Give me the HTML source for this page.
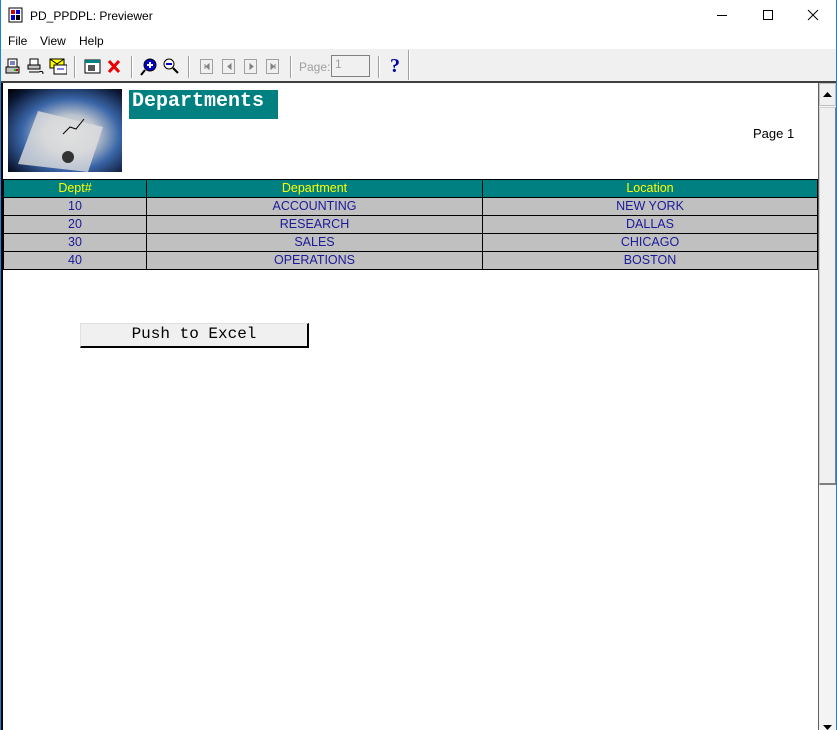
<!DOCTYPE html>
<html><head><style>
*{margin:0;padding:0;box-sizing:border-box}
body{width:837px;height:730px;overflow:hidden;background:#fff;font-family:"Liberation Sans",sans-serif;position:relative}
.a{position:absolute}
.t{font-size:12px;color:#000}
.sep{position:absolute;top:56px;width:2px;height:22px;border-left:1px solid #a0a0a0;border-right:1px solid #fff}
.nav{position:absolute;top:59px;width:13px;height:15px;border:1px solid #a0a0a0;background:#f0f0f0}
table{border-collapse:collapse;position:absolute;left:3px;top:179px;width:815px;font-size:12.5px}
td{border:1px solid #000;height:18px;text-align:center;padding:0;line-height:15px}
tr.h td{background:#008080;color:#ffff00}
tr.r td{background:#c0c0c0;color:#1a1a9a}
</style></head><body>
<div class="a" style="left:0;top:0;width:1px;height:730px;background:#1883d7"></div>
<div class="a" style="left:836px;top:0;width:1px;height:730px;background:#1883d7"></div>
<svg class="a" style="left:8px;top:7px" width="16" height="16"><rect x="1" y="1" width="13" height="14" fill="#fff" stroke="#000"/><rect x="3" y="3" width="4" height="4" fill="#c00"/><rect x="8" y="3" width="4" height="4" fill="#00c"/><rect x="3" y="8" width="4" height="5" fill="#00c"/><rect x="8" y="8" width="4" height="5" fill="#000"/></svg>
<div class="a t" style="left:30px;top:9px">PD_PPDPL: Previewer</div>
<svg class="a" style="left:715px;top:8px" width="110" height="16"><line x1="2" y1="7.5" x2="12" y2="7.5" stroke="#000"/><rect x="48.5" y="2.5" width="9" height="9" fill="none" stroke="#000"/><path d="M93 2L103 12M103 2L93 12" stroke="#000"/></svg>
<div class="a t" style="left:8px;top:34px">File</div>
<div class="a t" style="left:40px;top:34px">View</div>
<div class="a t" style="left:79px;top:34px">Help</div>
<div class="a" style="left:1px;top:49px;width:835px;height:33px;background:#f0f0f0"></div>
<svg class="a" style="left:5px;top:58px" width="62" height="18">
<rect x="3" y="1" width="9" height="8" fill="#fff" stroke="#000"/><line x1="5" y1="4" x2="10" y2="4" stroke="#008"/><line x1="5" y1="6" x2="10" y2="6" stroke="#008"/><rect x="1" y="9" width="13" height="6" fill="#c0c0c0" stroke="#000"/><rect x="9" y="11" width="2" height="2" fill="#0c0"/><rect x="11" y="11" width="2" height="2" fill="#c00"/>
<rect x="25" y="1" width="8" height="6" fill="#fff" stroke="#000"/><rect x="23" y="7" width="12" height="4" fill="#c0c0c0" stroke="#000"/><path d="M24 14H34M34 14Q38 12 38 16" stroke="#000" fill="none"/>
<rect x="45" y="1" width="14" height="9" fill="#ff0" stroke="#000"/><path d="M45 1L52 6L59 1" stroke="#000" fill="none"/><rect x="49" y="7" width="13" height="9" fill="#fff" stroke="#000"/><line x1="52" y1="11" x2="59" y2="11" stroke="#00c"/></svg>
<div class="sep" style="left:74px"></div>
<svg class="a" style="left:84px;top:58px" width="40" height="18"><rect x="1" y="2" width="15" height="13" fill="#fff" stroke="#000"/><rect x="1" y="2" width="15" height="3" fill="#008080"/><rect x="4" y="7" width="7" height="6" fill="#555"/><path d="M25 3L35 14M35 3L25 14" stroke="#e00" stroke-width="3"/></svg>
<div class="sep" style="left:131px"></div>
<svg class="a" style="left:140px;top:57px" width="42" height="20"><circle cx="10" cy="8" r="6" fill="#00c" stroke="#000"/><path d="M7 8H13M10 5V11" stroke="#fff" stroke-width="2"/><line x1="5" y1="13" x2="1" y2="18" stroke="#000" stroke-width="2"/><circle cx="29" cy="7" r="5" fill="#fff" stroke="#000"/><path d="M26 7H32" stroke="#00c" stroke-width="2"/><line x1="33" y1="11" x2="38" y2="16" stroke="#000" stroke-width="2"/></svg>
<div class="sep" style="left:188px"></div>
<div class="nav" style="left:200px"></div><div class="nav" style="left:222px"></div><div class="nav" style="left:244px"></div><div class="nav" style="left:266px"></div>
<svg class="a" style="left:200px;top:59px" width="80" height="15"><path d="M5 5V10M9 5L6 7.5L9 10Z M31 5L28 7.5L31 10Z M50 5L53 7.5L50 10Z M71 5L74 7.5L71 10ZM75 5V10" stroke="#808080" fill="#808080"/></svg>
<div class="sep" style="left:290px"></div>
<div class="a" style="left:299px;top:60px;font-size:12px;color:#a0a0a0">Page:</div>
<div class="a" style="left:331px;top:55px;width:39px;height:22px;border:1px solid #808080;background:#f0f0f0;font-size:12px;color:#a0a0a0;padding:1px 3px">1</div>
<div class="sep" style="left:378px"></div>
<div class="a" style="left:390px;top:55px;font-size:20px;font-weight:bold;color:#0000a0;font-family:'Liberation Serif',serif">?</div>
<div class="sep" style="left:408px;height:30px;top:50px"></div>
<div class="a" style="left:1px;top:81px;width:835px;height:2px;background:#404040"></div>
<div class="a" style="left:1px;top:83px;width:2px;height:647px;background:#000"></div>
<div class="a" style="left:818px;top:83px;width:18px;height:647px;background:#f4f4f4;border-left:1px solid #606060"></div>
<div class="a" style="left:819px;top:83px;width:17px;height:23px;background:#f0f0f0;border:1px solid #c0c0c0"></div>
<svg class="a" style="left:823px;top:92px" width="9" height="5"><path d="M0 5L4.5 0L9 5Z" fill="#000"/></svg>
<div class="a" style="left:819px;top:107px;width:17px;height:378px;background:#f0f0f0;border:1px solid #d0d0d0;border-right-color:#808080;border-bottom:2px solid #808080"></div>
<svg class="a" style="left:823px;top:725px" width="9" height="5"><path d="M0 0L4.5 5L9 0Z" fill="#000"/></svg>
<div class="a" style="left:8px;top:89px;width:114px;height:83px;background:radial-gradient(ellipse at 55% 55%,#e8e8e8 0%,#bcc3cc 30%,#3a66a8 55%,#0a1530 85%,#000 100%)"></div>
<svg class="a" style="left:8px;top:89px" width="114" height="83"><path d="M10 75L30 22L95 38L80 83Z" fill="#ddd" opacity=".8"/><path d="M55 45L62 38L68 40L76 30" stroke="#000" fill="none"/><circle cx="60" cy="68" r="6" fill="#333"/></svg>
<div class="a" style="left:129px;top:90px;width:149px;height:29px;background:#008080;color:#fff;font-family:'Liberation Mono',monospace;font-weight:bold;font-size:20px;padding:2px 3px 0;line-height:20px">Departments</div>
<div class="a" style="left:753px;top:126px;font-size:13px">Page 1</div>
<table>
<colgroup><col style="width:143px"><col style="width:336px"><col></colgroup>
<tr class="h"><td>Dept#</td><td>Department</td><td>Location</td></tr>
<tr class="r"><td>10</td><td>ACCOUNTING</td><td>NEW YORK</td></tr>
<tr class="r"><td>20</td><td>RESEARCH</td><td>DALLAS</td></tr>
<tr class="r"><td>30</td><td>SALES</td><td>CHICAGO</td></tr>
<tr class="r"><td>40</td><td>OPERATIONS</td><td>BOSTON</td></tr>
</table>
<div class="a" style="left:80px;top:323px;width:229px;height:25px;background:#f0f0f0;border:1px solid #e0e0e0;border-right:2px solid #000;border-bottom:2px solid #000;font-family:'Liberation Mono',monospace;font-size:16px;text-align:center;line-height:21px">Push to Excel</div>
</body></html>
